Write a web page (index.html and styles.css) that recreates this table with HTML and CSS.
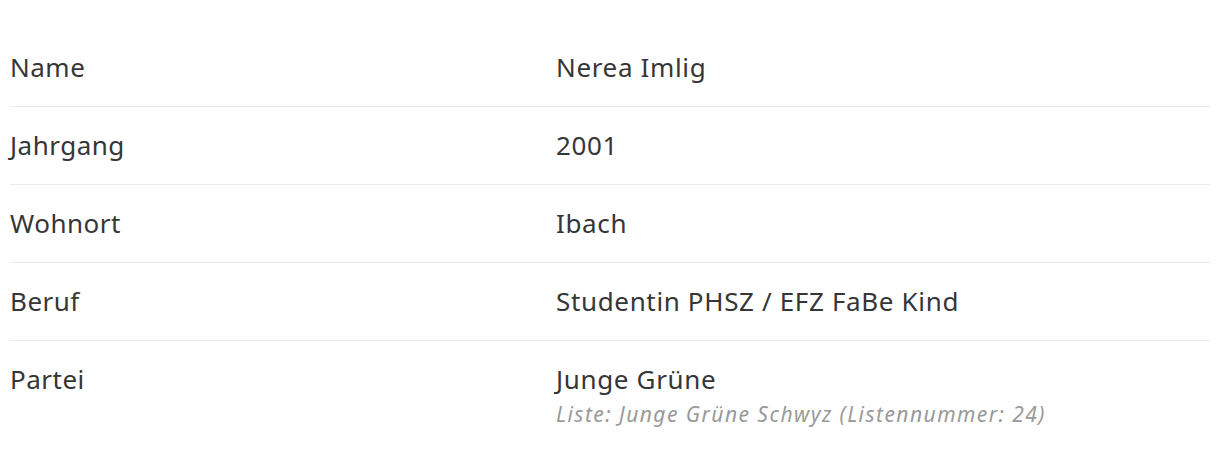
FILE: index.html
```html
<!DOCTYPE html>
<html lang="de">
<head>
<meta charset="utf-8">
<title>Kandidatin</title>
<link rel="stylesheet" href="styles.css">
</head>
<body>
<div class="details">
  <div class="row">
    <div class="label">Name</div>
    <div class="value">Nerea Imlig</div>
  </div>
  <div class="row">
    <div class="label">Jahrgang</div>
    <div class="value">2001</div>
  </div>
  <div class="row">
    <div class="label">Wohnort</div>
    <div class="value">Ibach</div>
  </div>
  <div class="row">
    <div class="label">Beruf</div>
    <div class="value">Studentin PHSZ / EFZ FaBe Kind</div>
  </div>
  <div class="row last">
    <div class="label">Partei</div>
    <div class="value">Junge Grüne
      <div class="sub">Liste: Junge Grüne Schwyz (Listennummer: 24)</div>
    </div>
  </div>
</div>
</body>
</html>
```
FILE: styles.css
```css
html, body {
  margin: 0;
  padding: 0;
  background: #fff;
}
body {
  font-family: "Noto Sans", "Open Sans", sans-serif;
  color: #363636;
}
.details {
  margin: 29px 10px 0;
}
.row {
  display: grid;
  grid-template-columns: 545px 1fr;
  padding: 19px 0 19px;
  border-bottom: 1px solid #ebebeb;
  font-size: 26px;
  line-height: 39px;
  letter-spacing: 0.5px;
}
.row.last {
  border-bottom: none;
}
.value {
  padding-left: 1px;
  letter-spacing: 0.65px;
}
.sub {
  font-size: 21px;
  line-height: 30px;
  font-style: italic;
  letter-spacing: 1.45px;
  color: #999;
}
```
